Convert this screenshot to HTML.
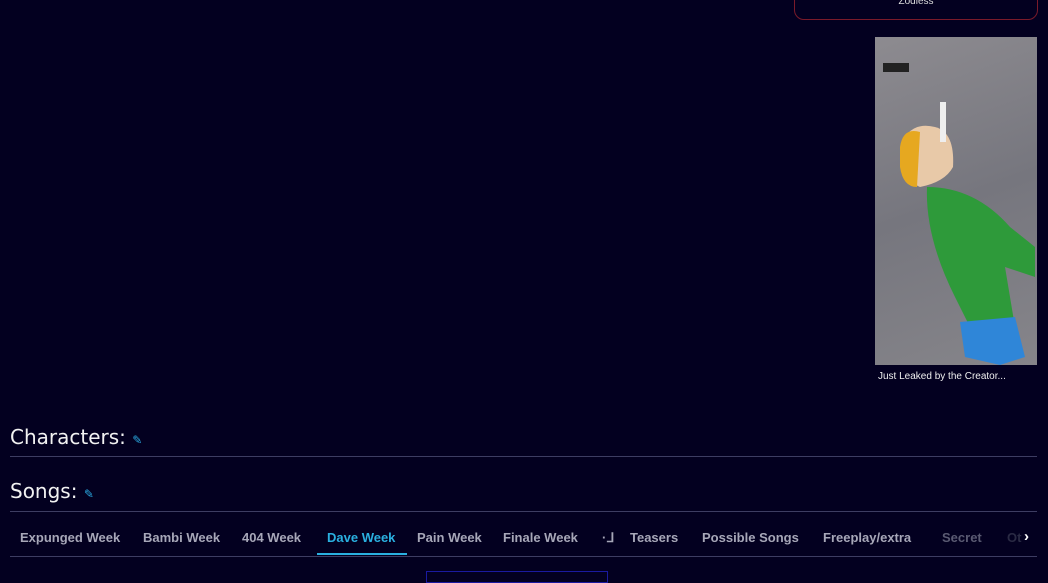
<!DOCTYPE html>
<html><head><meta charset="utf-8"><style>
body{margin:0;width:1048px;height:577px;background:#030020;overflow:hidden;position:relative;font-family:"Liberation Sans",sans-serif;color:#fff}
.box{position:absolute;left:794px;top:-20px;width:242px;height:38px;border:1px solid #7a1a2a;border-radius:10px}
.box span{position:absolute;top:15px;width:100%;text-align:center;font-size:10px;color:#ddd}
.img{position:absolute;left:875px;top:37px;width:162px;height:328px;background:linear-gradient(160deg,#8d8b90,#76767e 50%,#86858a);overflow:hidden}
.cap{position:absolute;left:878px;top:371px;font-size:10px;color:#eee}
h2{position:absolute;left:10px;margin:0;font-family:"Comic Sans MS","DejaVu Sans",sans-serif;font-weight:normal;font-size:20px;color:#f2f2f2}
.line{position:absolute;left:10px;width:1027px;height:1px;background:#3d3d62}
.tabs{position:absolute;top:530px;left:10px;font-size:13px;font-weight:bold;color:#a7a7b8;white-space:nowrap}
.tabs span{position:absolute}
.ul{position:absolute;left:317px;top:553px;width:90px;height:2px;background:#2ab0e0}
</style></head><body>
<div class="box"><span>Zodless</span></div>
<div class="img">
<svg width="162" height="328" viewBox="0 0 162 328">
<rect x="8" y="26" width="26" height="9" fill="#222"/>
<path d="M30 100 Q40 85 60 90 Q80 95 78 130 Q70 145 45 150 Q30 145 30 100Z" fill="#e8c9a8"/>
<path d="M25 110 Q28 90 45 95 L42 150 Q28 150 25 130Z" fill="#e6a820"/>
<path d="M52 150 Q100 150 135 190 L160 210 L160 240 L130 230 L140 290 L100 300 L80 260 Q50 200 52 150Z" fill="#2e9a3a"/>
<path d="M85 285 L140 280 L150 320 L125 328 L90 320Z" fill="#2f86d8"/>
<rect x="65" y="65" width="6" height="40" fill="#eee"/>
</svg></div>
<div class="cap">Just Leaked by the Creator...</div>
<h2 style="top:425px">Characters: <span style="font-size:12px;color:#2aa8e0">✎</span></h2>
<div class="line" style="top:456px"></div>
<h2 style="top:479px">Songs: <span style="font-size:12px;color:#2aa8e0">✎</span></h2>
<div class="line" style="top:511px"></div>
<div class="tabs">
<span style="left:10px">Expunged Week</span>
<span style="left:133px">Bambi Week</span>
<span style="left:232px">404 Week</span>
<span style="left:317px;color:#2ab0e0">Dave Week</span>
<span style="left:407px">Pain Week</span>
<span style="left:493px">Finale Week</span>
<span style="left:592px">·ᒧ</span>
<span style="left:620px">Teasers</span>
<span style="left:692px">Possible Songs</span>
<span style="left:813px">Freeplay/extra</span>
<span style="left:932px;color:#5a5a72">Secret</span>
<span style="left:997px;color:#2a2a44">Ot</span>
<span style="left:1014px;color:#fff;font-size:15px;top:-2px">›</span>
</div>
<div class="ul"></div>
<div class="line" style="top:556px"></div>
<div style="position:absolute;left:426px;top:571px;width:180px;height:10px;border:1px solid #1a1aa0"></div>
</body></html>
